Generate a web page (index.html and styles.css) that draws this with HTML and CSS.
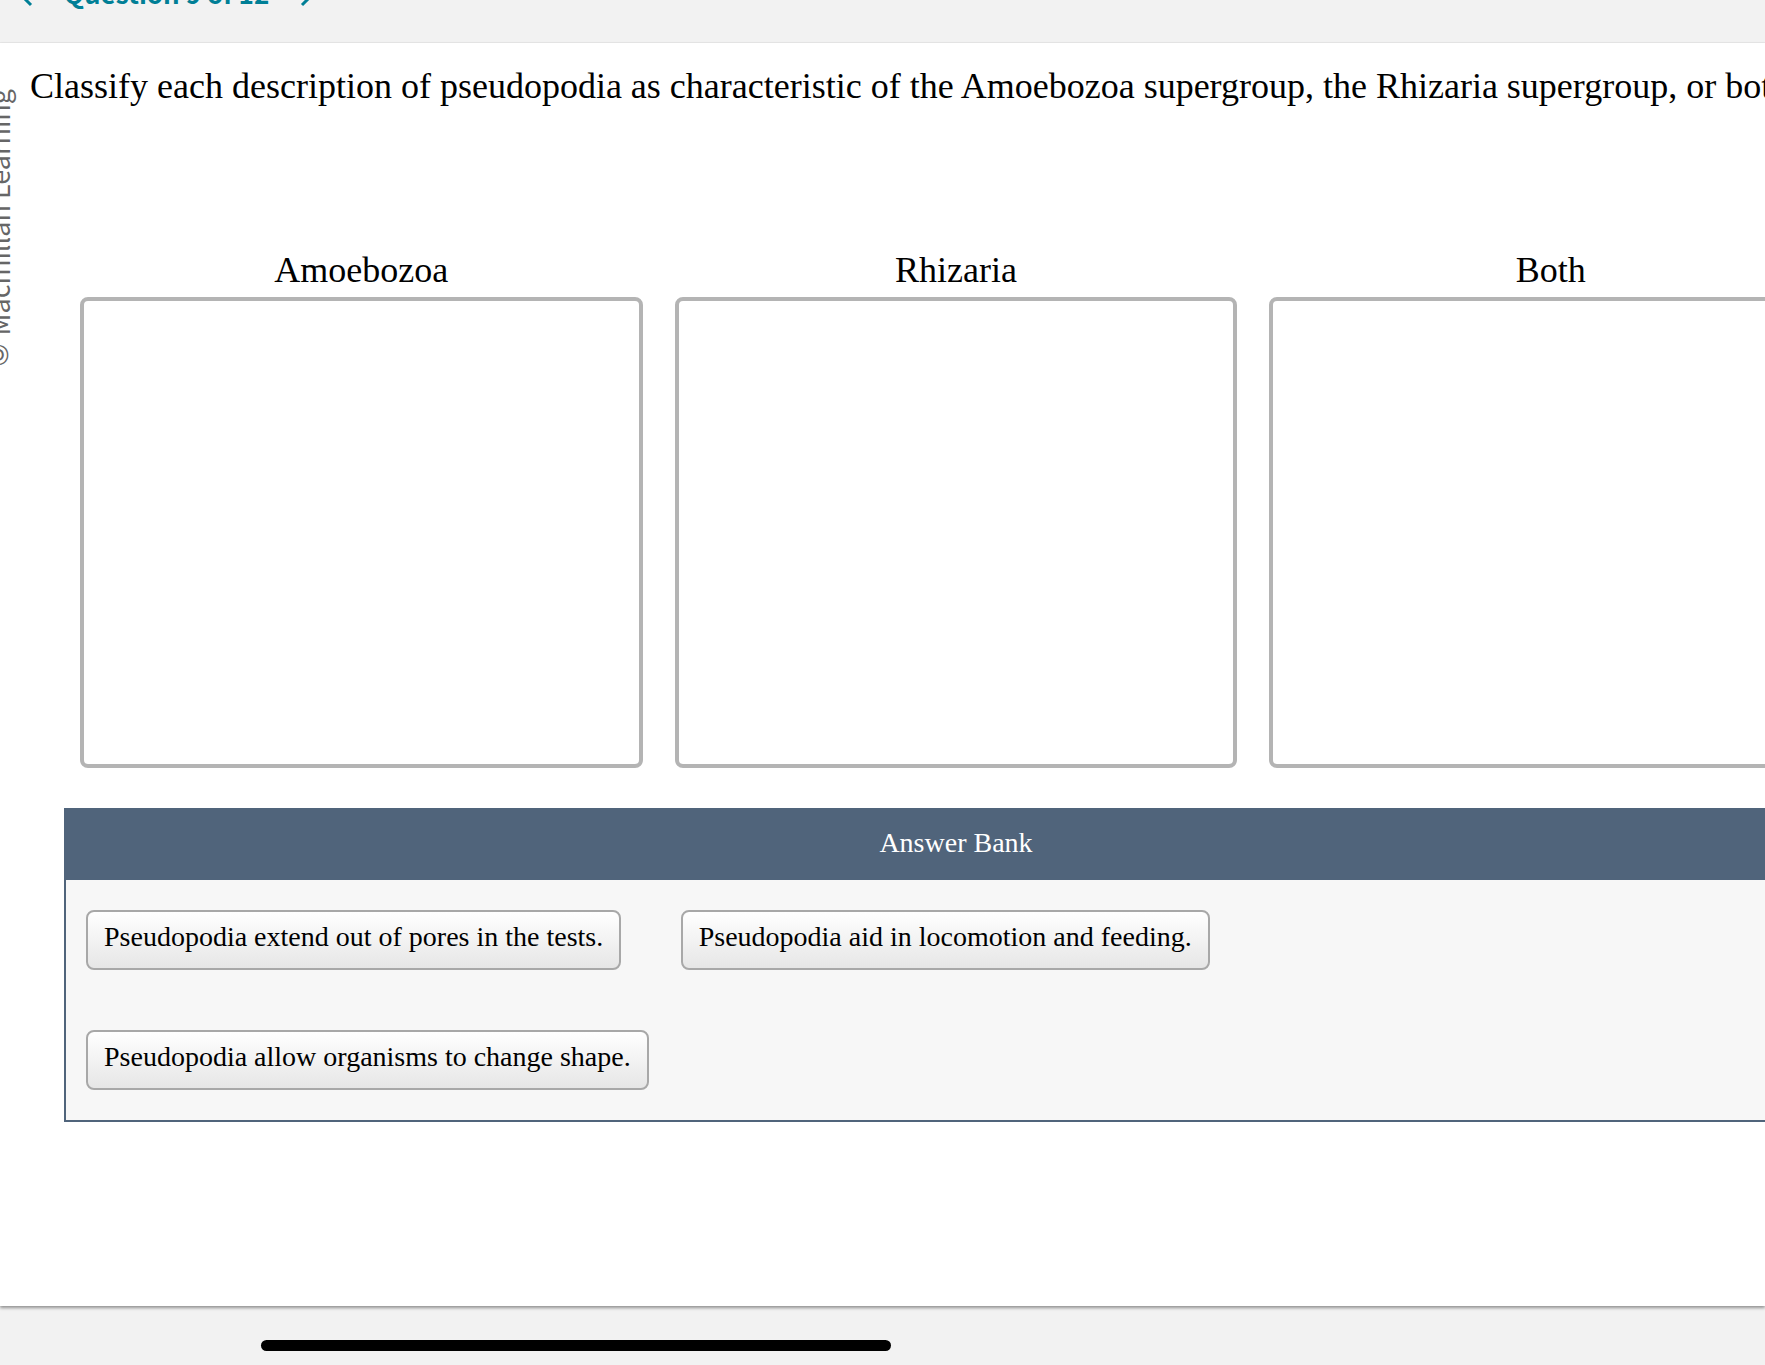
FILE: index.html
```
<!DOCTYPE html>
<html lang="en">
<head>
  <meta charset="UTF-8" />
  <meta name="viewport" content="width=device-width, initial-scale=1" />
  <title>Question 9 of 12</title>
  <link rel="stylesheet" href="styles.css">
</head>
<body>

<header class="question-nav">
  <button class="nav-btn" aria-label="Previous question">
    <svg width="14" height="24" viewBox="0 0 14 24"><path d="M12 2 L2 12 L12 22" /></svg>
  </button>
  <h1 class="question-count">Question 9 of 12</h1>
  <button class="nav-btn" aria-label="Next question">
    <svg width="14" height="24" viewBox="0 0 14 24"><path d="M2 2 L12 12 L2 22" /></svg>
  </button>
</header>

<main class="question">
  <small class="copyright">© Macmillan Learning</small>

  <div class="question-body">
    <p class="prompt">Classify each description of pseudopodia as characteristic of the Amoebozoa supergroup, the Rhizaria supergroup, or both.</p>

    <div class="sorting">
      <div class="bins">
        <section class="bin">
          <h2>Amoebozoa</h2>
          <div class="drop-area"></div>
        </section>
        <section class="bin">
          <h2>Rhizaria</h2>
          <div class="drop-area"></div>
        </section>
        <section class="bin">
          <h2>Both</h2>
          <div class="drop-area"></div>
        </section>
      </div>

      <section class="answer-bank">
        <h2>Answer Bank</h2>
        <div class="answers">
          <button class="answer">Pseudopodia extend out of pores in the tests.</button>
          <button class="answer">Pseudopodia aid in locomotion and feeding.</button>
          <button class="answer">Pseudopodia allow organisms to change shape.</button>
        </div>
      </section>
    </div>
  </div>
</main>

<footer class="bottom-bar">
  <div class="home-indicator"></div>
</footer>

</body>
</html>
```

FILE: styles.css
```
* {
  box-sizing: border-box;
}

body {
  margin: 0;
  min-height: 100vh;
  display: flex;
  flex-direction: column;
  overflow: hidden;
  font-family: "Liberation Serif", "Times New Roman", serif;
  color: #000;
  background-color: #f2f2f2;
}

h1,
h2,
p {
  margin: 0;
  font-weight: normal;
}

button {
  font-family: inherit;
  color: inherit;
  cursor: pointer;
}

/* the bar is scrolled mostly out of view */
.question-nav {
  display: flex;
  align-items: center;
  gap: 31px;
  height: 100px;
  margin-top: -57px;
  padding: 4px 19px 0;
  border-bottom: 1px solid #e8e8e8;
  color: #007f96;
}

.nav-btn {
  display: flex;
  padding: 0;
  border: none;
  background: none;
}

.nav-btn svg {
  fill: none;
  stroke: currentColor;
  stroke-width: 3;
}

.question-count {
  padding-bottom: 4px;
  font-family: "Noto Sans CJK SC", sans-serif;
  font-size: 26px;
  line-height: 36px;
  font-weight: bold;
}

.question {
  flex: 1;
  display: flex;
  align-items: flex-start;
  background-color: #fff;
  box-shadow: 0 2px 3px rgba(0, 0, 0, 0.4);
}

/* sits half under the left edge of the window */
.copyright {
  flex: none;
  width: 30px;
  margin: 46px 16px 0 -16px;
  writing-mode: vertical-rl;
  transform: rotate(180deg);
  font-family: "Noto Sans CJK SC", sans-serif;
  font-size: 27px;
  line-height: 30px;
  white-space: nowrap;
  color: #666;
}

.question-body {
  flex: 1;
  min-width: 0;
}

.prompt {
  padding-top: 22px;
  font-size: 36px;
  line-height: 42px;
  white-space: nowrap;
}

/* wider than the window, runs off the right edge */
.sorting {
  margin: 142px -83px 0 34px;
}

.bins {
  display: flex;
  gap: 32px;
  padding: 0 16px;
}

.bin {
  flex: 1;
}

.bin h2 {
  margin-bottom: 6px;
  font-size: 36px;
  line-height: 42px;
  text-align: center;
}

.drop-area {
  height: 471px;
  border: 4px solid #b4b4b4;
  border-radius: 8px;
}

.answer-bank {
  margin-top: 40px;
  border: 2px solid #50647b;
  background-color: #f7f7f7;
}

.answer-bank h2 {
  padding: 15px 0 19px;
  font-size: 28px;
  line-height: 36px;
  text-align: center;
  color: #fff;
  background-color: #50647b;
}

.answers {
  display: grid;
  grid-template-columns: repeat(3, 1fr);
  justify-items: start;
  gap: 60px 24px;
  padding: 30px 0 30px 20px;
}

.answer {
  height: 60px;
  padding: 0 16px 6px;
  border: 2px solid #a8a8a8;
  border-radius: 8px;
  font-size: 28px;
  white-space: nowrap;
  background: linear-gradient(#fff, #e6e6e6);
}

.answers .answer:nth-child(3) {
  grid-column: 1;
}

.bottom-bar {
  height: 59px;
  padding: 34px 0 0 261px;
}

.home-indicator {
  width: 630px;
  height: 11px;
  border-radius: 6px;
  background-color: #000;
}
```
